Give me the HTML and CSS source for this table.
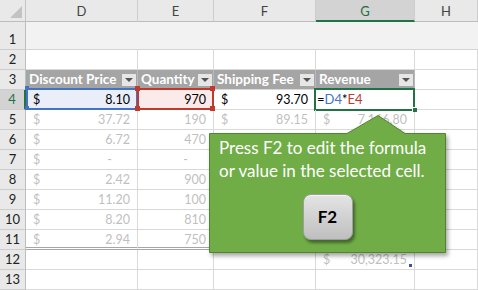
FILE: index.html
```html
<!DOCTYPE html>
<html>
<head>
<meta charset="utf-8">
<link rel="stylesheet" href="styles.css">
</head>
<body>
<div class="sheet">
  <div class="corner"><span class="tri"></span></div>
  <div class="colhead">D</div>
  <div class="colhead">E</div>
  <div class="colhead">F</div>
  <div class="colhead sel">G</div>
  <div class="colhead">H</div>

  <div class="rowhead tall">1</div>
  <div class="cell r1"></div><div class="cell r1"></div><div class="cell r1"></div><div class="cell r1"></div><div class="cell r1"></div>

  <div class="rowhead">2</div>
  <div class="cell"></div><div class="cell"></div><div class="cell"></div><div class="cell"></div><div class="cell"></div>

  <div class="rowhead">3</div>
  <div class="cell th"><span>Discount Price</span><span class="filter"></span></div>
  <div class="cell th"><span>Quantity</span><span class="filter"></span></div>
  <div class="cell th"><span>Shipping Fee</span><span class="filter"></span></div>
  <div class="cell th"><span>Revenue</span><span class="filter"></span></div>
  <div class="cell"></div>

  <div class="rowhead sel">4</div>
  <div class="cell acc ref-d"><span>$</span><span>8.10</span></div>
  <div class="cell num ref-e">970</div>
  <div class="cell acc"><span>$</span><span>93.70</span></div>
  <div class="cell active"><span>=</span><span class="fd">D4</span><span>*</span><span class="fe">E4</span></div>
  <div class="cell"></div>

  <div class="rowhead">5</div>
  <div class="cell acc faded"><span>$</span><span>37.72</span></div>
  <div class="cell num faded">190</div>
  <div class="cell acc faded"><span>$</span><span>89.15</span></div>
  <div class="cell acc faded"><span>$</span><span>7,166.80</span></div>
  <div class="cell"></div>

  <div class="rowhead">6</div>
  <div class="cell acc faded"><span>$</span><span>6.72</span></div>
  <div class="cell num faded">470</div>
  <div class="cell"></div>
  <div class="cell"></div>
  <div class="cell"></div>

  <div class="rowhead">7</div>
  <div class="cell acc faded"><span>$</span><span class="dash">-</span></div>
  <div class="cell num faded"><span class="dash">-</span></div>
  <div class="cell"></div>
  <div class="cell"></div>
  <div class="cell"></div>

  <div class="rowhead">8</div>
  <div class="cell acc faded"><span>$</span><span>2.42</span></div>
  <div class="cell num faded">900</div>
  <div class="cell"></div>
  <div class="cell"></div>
  <div class="cell"></div>

  <div class="rowhead">9</div>
  <div class="cell acc faded"><span>$</span><span>11.20</span></div>
  <div class="cell num faded">100</div>
  <div class="cell"></div>
  <div class="cell"></div>
  <div class="cell"></div>

  <div class="rowhead">10</div>
  <div class="cell acc faded"><span>$</span><span>8.20</span></div>
  <div class="cell num faded">810</div>
  <div class="cell"></div>
  <div class="cell"></div>
  <div class="cell"></div>

  <div class="rowhead">11</div>
  <div class="cell acc faded tot"><span>$</span><span>2.94</span></div>
  <div class="cell num faded tot">750</div>
  <div class="cell tot"></div>
  <div class="cell tot"></div>
  <div class="cell"></div>

  <div class="rowhead">12</div>
  <div class="cell"></div>
  <div class="cell"></div>
  <div class="cell"></div>
  <div class="cell acc faded total"><span>$</span><span>30,323.15</span></div>
  <div class="cell"></div>

  <div class="rowhead">13</div>
  <div class="cell"></div><div class="cell"></div><div class="cell"></div><div class="cell"></div><div class="cell"></div>

  <div class="callout">
    <svg class="shape" width="237" height="138" viewBox="0 0 237 138">
      <path d="M0.5 18.5 L138 18.5 L169 0.5 L196 18.5 L236.5 18.5 L236.5 137.5 L0.5 137.5 Z" fill="#70ad47" stroke="#548235" stroke-width="1"/>
    </svg>
    <div class="callout-body">
      <p class="tip">Press F2 to edit the formula<br>or value in the selected cell.</p>
      <div class="key">F2</div>
    </div>
  </div>
</div>
</body>
</html>
```

FILE: styles.css
```css
html, body {
  margin: 0;
  padding: 0;
  background: #ffffff;
}

.sheet {
  position: relative;
  display: grid;
  grid-template-columns: 26px 112px 76px 102px 99px 1fr;
  grid-template-rows: 22px 28px repeat(12, 20px);
  width: 478px;
  height: 290px;
  overflow: hidden;
  font-family: Lato, "Open Sans", sans-serif;
  font-size: 12.5px;
  color: #000;
}

.sheet > div {
  box-sizing: border-box;
}

.corner {
  position: relative;
  background: #e9e9e9;
  border-right: 1px solid #c4c4c4;
  border-bottom: 1px solid #bdbdbd;
}

.tri {
  position: absolute;
  right: 3px;
  bottom: 3px;
  width: 0;
  height: 0;
  border-left: 12px solid transparent;
  border-bottom: 12px solid #c3c3c3;
}

.colhead {
  background: #e9e9e9;
  border-right: 1px solid #cdcdcd;
  border-bottom: 1px solid #bdbdbd;
  color: #444;
  font-size: 13px;
  line-height: 21px;
  padding-top: 1px;
  text-align: center;
}

.colhead.sel {
  background: #d3d3d3;
  color: #1f6b42;
  border-bottom: 2px solid #217346;
}

.rowhead {
  background: #e9e9e9;
  border-right: 1px solid #bdbdbd;
  border-bottom: 1px solid #cdcdcd;
  color: #222;
  font-size: 13px;
  line-height: 19px;
  text-align: center;
  display: flex;
  align-items: flex-end;
  justify-content: center;
}

.rowhead.sel {
  background: #d3d3d3;
  color: #217346;
  border-right: 2px solid #217346;
}

.cell {
  position: relative;
  border-right: 1px solid #d9d9d9;
  border-bottom: 1px solid #d9d9d9;
  line-height: 19px;
  white-space: nowrap;
}

.cell.r1 {
  background: #f2f2f2;
  border-right: none;
  border-bottom: 1px solid #d4d4d4;
}

.th {
  background: #a5a5a5;
  color: #fff;
  font-weight: bold;
  font-size: 13.5px;
  border-right-color: #b9b9b9;
  padding-left: 3px;
  display: flex;
  align-items: center;
  justify-content: space-between;
}

.filter {
  position: relative;
  width: 14px;
  height: 12px;
  margin-right: 1px;
  background: #e6e6e6;
  display: flex;
  align-items: center;
  justify-content: center;
}

.filter::after {
  content: "";
  width: 0;
  height: 0;
  border-left: 4px solid transparent;
  border-right: 4px solid transparent;
  border-top: 4px solid #555;
}

.acc {
  display: flex;
  justify-content: space-between;
  padding: 0 7px 0 7px;
}

.num {
  text-align: right;
  padding-right: 7px;
}

.dash {
  margin-right: 18px;
}

.faded {
  color: #bfbfbf;
}

.tot {
  border-bottom: 3px double #a6a6a6;
}

.ref-d {
  background: #e9eef8;
}

.ref-d::after {
  content: "";
  position: absolute;
  left: 0;
  top: -2px;
  right: -1px;
  bottom: -1px;
  border: 2px solid #4472c4;
}

.ref-d::before {
  content: "";
  position: absolute;
  left: -1px;
  top: -4px;
  width: 4px;
  height: 4px;
  background: #4472c4;
  box-shadow: 0 20px 0 #4472c4;
  z-index: 1;
}

.ref-e {
  background: #fbeaea;
}

.ref-e::after {
  content: "";
  position: absolute;
  left: -1px;
  top: -2px;
  right: -1px;
  bottom: -1px;
  border: 2px solid #c0392b;
}

.ref-e::before {
  content: "";
  position: absolute;
  left: -3px;
  top: -4px;
  width: 5px;
  height: 5px;
  background: #c0392b;
  box-shadow: 75px 0 0 #c0392b, 0 20px 0 #c0392b, 75px 20px 0 #c0392b;
  z-index: 1;
}

.active {
  padding-left: 1px;
  font-size: 13px;
}

.active::after {
  content: "";
  position: absolute;
  left: -2px;
  top: -2px;
  right: -1px;
  bottom: -2px;
  border: 2px solid #217346;
}

.active::before {
  content: "";
  position: absolute;
  right: -3px;
  bottom: -3px;
  width: 4px;
  height: 4px;
  background: #217346;
  border-left: 1px solid #fff;
  border-top: 1px solid #fff;
  z-index: 1;
}

.fd {
  color: #4472c4;
}

.fe {
  color: #c0392b;
}

.total::after {
  content: "";
  position: absolute;
  right: 2px;
  bottom: 2px;
  width: 3px;
  height: 3px;
  background: #4050a8;
}

.callout {
  position: absolute;
  left: 209px;
  top: 115px;
  width: 237px;
  height: 138px;
}

.shape {
  position: absolute;
  left: 0;
  top: 0;
  filter: drop-shadow(2px 3px 2px rgba(0, 0, 0, 0.35));
}

.callout-body {
  position: relative;
  padding-top: 21px;
  display: flex;
  flex-direction: column;
  align-items: flex-start;
}

.tip {
  margin: 0 0 0 10px;
  color: #fff;
  font-size: 17px;
  line-height: 23px;
  white-space: nowrap;
}

.key {
  align-self: center;
  box-sizing: border-box;
  width: 50px;
  height: 46px;
  margin-top: 12px;
  border: 1px solid #9e9e9e;
  border-radius: 8px;
  background: linear-gradient(#e4e4e4, #bfbfbf);
  box-shadow: inset 0 1px 0 #f4f4f4, 2px 3px 3px rgba(0, 0, 0, 0.4);
  color: #000;
  font-weight: bold;
  font-size: 17px;
  line-height: 44px;
  text-align: center;
}
```
